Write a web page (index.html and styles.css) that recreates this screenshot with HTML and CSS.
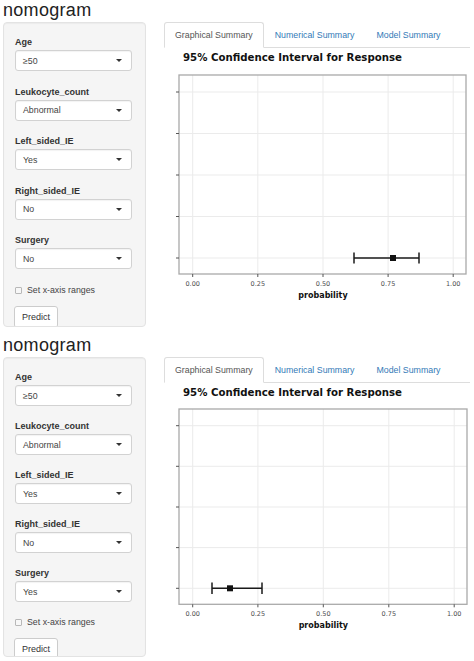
FILE: index.html
```html
<!DOCTYPE html>
<html>
<head>
<meta charset="utf-8">
<link rel="stylesheet" href="styles.css">
</head>
<body>
<section class="app">
  <h2 class="app-title">nomogram</h2>
  <div class="app-row">
    <div class="well">
      <div class="field"><span class="field-label">Age</span><div class="select"><span>≥50</span><i class="caret"></i></div></div>
      <div class="field"><span class="field-label">Leukocyte_count</span><div class="select"><span>Abnormal</span><i class="caret"></i></div></div>
      <div class="field"><span class="field-label">Left_sided_IE</span><div class="select"><span>Yes</span><i class="caret"></i></div></div>
      <div class="field"><span class="field-label">Right_sided_IE</span><div class="select"><span>No</span><i class="caret"></i></div></div>
      <div class="field"><span class="field-label">Surgery</span><div class="select"><span>No</span><i class="caret"></i></div></div>
      <div class="check"><span class="check-box"></span><span>Set x-axis ranges</span></div>
      <button class="btn">Predict</button>
    </div>
    <div class="main">
      <ul class="tabs">
        <li class="tab tab--active">Graphical Summary</li>
        <li class="tab">Numerical Summary</li>
        <li class="tab">Model Summary</li>
      </ul>
      <div class="plot-title">95% Confidence Interval for Response</div>
      <svg class="plot" width="306" height="237" viewBox="0 0 306 237">
        <g class="grid">
          <line x1="28.7" y1="7" x2="28.7" y2="206"/><line x1="93.8" y1="7" x2="93.8" y2="206"/><line x1="159" y1="7" x2="159" y2="206"/><line x1="224.1" y1="7" x2="224.1" y2="206"/><line x1="289.2" y1="7" x2="289.2" y2="206"/>
          <line x1="15" y1="24" x2="302" y2="24"/><line x1="15" y1="65.5" x2="302" y2="65.5"/><line x1="15" y1="107" x2="302" y2="107"/><line x1="15" y1="148.5" x2="302" y2="148.5"/><line x1="15" y1="190" x2="302" y2="190"/>
        </g>
        <rect class="frame" x="15" y="7" width="287" height="199"/>
        <g class="tick">
          <line x1="12" y1="24" x2="15" y2="24"/><line x1="12" y1="65.5" x2="15" y2="65.5"/><line x1="12" y1="107" x2="15" y2="107"/><line x1="12" y1="148.5" x2="15" y2="148.5"/><line x1="12" y1="190" x2="15" y2="190"/>
          <line x1="28.7" y1="206" x2="28.7" y2="209"/><line x1="93.8" y1="206" x2="93.8" y2="209"/><line x1="159" y1="206" x2="159" y2="209"/><line x1="224.1" y1="206" x2="224.1" y2="209"/><line x1="289.2" y1="206" x2="289.2" y2="209"/>
        </g>
        <g class="axis-label">
          <text x="28.7" y="217.7">0.00</text><text x="93.8" y="217.7">0.25</text><text x="159" y="217.7">0.50</text><text x="224.1" y="217.7">0.75</text><text x="289.2" y="217.7">1.00</text>
        </g>
        <text class="axis-title" x="159" y="230.1">probability</text>
        <g class="errorbar">
          <line x1="190" y1="190" x2="255" y2="190"/><line x1="190" y1="184.5" x2="190" y2="195.5"/><line x1="255" y1="184.5" x2="255" y2="195.5"/>
        </g>
        <rect class="point" x="226" y="187" width="6" height="6"/>
      </svg>
    </div>
  </div>
</section>
<section class="app app--second">
  <h2 class="app-title">nomogram</h2>
  <div class="app-row">
    <div class="well">
      <div class="field"><span class="field-label">Age</span><div class="select"><span>≥50</span><i class="caret"></i></div></div>
      <div class="field"><span class="field-label">Leukocyte_count</span><div class="select"><span>Abnormal</span><i class="caret"></i></div></div>
      <div class="field"><span class="field-label">Left_sided_IE</span><div class="select"><span>Yes</span><i class="caret"></i></div></div>
      <div class="field"><span class="field-label">Right_sided_IE</span><div class="select"><span>No</span><i class="caret"></i></div></div>
      <div class="field"><span class="field-label">Surgery</span><div class="select"><span>Yes</span><i class="caret"></i></div></div>
      <div class="check"><span class="check-box"></span><span>Set x-axis ranges</span></div>
      <button class="btn">Predict</button>
    </div>
    <div class="main">
      <ul class="tabs">
        <li class="tab tab--active">Graphical Summary</li>
        <li class="tab">Numerical Summary</li>
        <li class="tab">Model Summary</li>
      </ul>
      <div class="plot-title">95% Confidence Interval for Response</div>
      <svg class="plot" width="306" height="237" viewBox="0 0 306 237">
        <g class="grid">
          <line x1="28.7" y1="6" x2="28.7" y2="201.3"/><line x1="93.9" y1="6" x2="93.9" y2="201.3"/><line x1="159.3" y1="6" x2="159.3" y2="201.3"/><line x1="224.8" y1="6" x2="224.8" y2="201.3"/><line x1="290.2" y1="6" x2="290.2" y2="201.3"/>
          <line x1="15" y1="22.7" x2="303" y2="22.7"/><line x1="15" y1="63.3" x2="303" y2="63.3"/><line x1="15" y1="104" x2="303" y2="104"/><line x1="15" y1="144.6" x2="303" y2="144.6"/><line x1="15" y1="185.3" x2="303" y2="185.3"/>
        </g>
        <rect class="frame" x="15" y="6" width="288" height="195.3"/>
        <g class="tick">
          <line x1="12" y1="22.7" x2="15" y2="22.7"/><line x1="12" y1="63.3" x2="15" y2="63.3"/><line x1="12" y1="104" x2="15" y2="104"/><line x1="12" y1="144.6" x2="15" y2="144.6"/><line x1="12" y1="185.3" x2="15" y2="185.3"/>
          <line x1="28.7" y1="201.3" x2="28.7" y2="204.3"/><line x1="93.9" y1="201.3" x2="93.9" y2="204.3"/><line x1="159.3" y1="201.3" x2="159.3" y2="204.3"/><line x1="224.8" y1="201.3" x2="224.8" y2="204.3"/><line x1="290.2" y1="201.3" x2="290.2" y2="204.3"/>
        </g>
        <g class="axis-label">
          <text x="28.7" y="212.7">0.00</text><text x="93.9" y="212.7">0.25</text><text x="159.3" y="212.7">0.50</text><text x="224.8" y="212.7">0.75</text><text x="290.2" y="212.7">1.00</text>
        </g>
        <text class="axis-title" x="159.3" y="224.8">probability</text>
        <g class="errorbar">
          <line x1="48" y1="185.3" x2="98" y2="185.3"/><line x1="48" y1="179.6" x2="48" y2="191"/><line x1="98" y1="179.6" x2="98" y2="191"/>
        </g>
        <rect class="point" x="63" y="182.3" width="6" height="6"/>
      </svg>
    </div>
  </div>
</section>
</body>
</html>
```

FILE: styles.css
```css
* { box-sizing: border-box; }

body {
  margin: 0;
  font-family: "Liberation Sans", Arial, sans-serif;
  color: #333;
  background: #fff;
}

.app {
  height: 335px;
  overflow: hidden;
  padding-left: 3px;
}

.app--second {
  height: 326px;
}

.app-title {
  margin: 0;
  height: 22px;
  font-size: 18px;
  line-height: 20px;
  font-weight: normal;
  letter-spacing: 0.3px;
  color: #222;
}

.app-row {
  display: flex;
  align-items: flex-start;
}

.well {
  flex: none;
  width: 143px;
  height: 305px;
  background: #f5f5f5;
  border: 1px solid #e3e3e3;
  border-radius: 4px;
  padding: 14px 13px 0 11px;
  overflow: hidden;
  box-shadow: inset 0 1px 1px rgba(0, 0, 0, 0.04);
}

.app--second .well {
  height: 300px;
}

.field {
  margin-bottom: 15.5px;
}

.app--second .field {
  margin-bottom: 15px;
}

.field-label {
  display: block;
  font-weight: bold;
  font-size: 9px;
  line-height: 11px;
  margin-bottom: 2px;
  color: #333;
}

.select {
  height: 21px;
  background: #fff;
  border: 1px solid #d2d2d2;
  border-radius: 3px;
  display: flex;
  align-items: center;
  justify-content: space-between;
  padding: 0 9px 0 7px;
  font-size: 8.8px;
  color: #444;
  box-shadow: inset 0 1px 1px rgba(0, 0, 0, 0.05);
}

.caret {
  width: 0;
  height: 0;
  border-left: 3px solid transparent;
  border-right: 3px solid transparent;
  border-top: 3.5px solid #333;
}

.check {
  display: flex;
  align-items: center;
  gap: 5px;
  height: 11px;
  font-size: 8.8px;
  line-height: 11px;
  color: #444;
  margin-bottom: 10.5px;
}

.app--second .check {
  margin-bottom: 9.5px;
}

.check-box {
  width: 7px;
  height: 7px;
  border: 1px solid #b8b8b8;
  border-radius: 1px;
  background: #f7f7f7;
}

.btn {
  display: block;
  margin-left: -1px;
  height: 22px;
  padding: 0 7px;
  font-family: "Liberation Sans", Arial, sans-serif;
  font-size: 9px;
  color: #333;
  background: #fff;
  border: 1px solid #ccc;
  border-radius: 3px;
}

.main {
  flex: none;
  width: 306px;
  margin-left: 18px;
}

.tabs {
  display: flex;
  list-style: none;
  margin: 0;
  padding: 0;
  border-bottom: 1px solid #ddd;
}

.tab {
  height: 26px;
  margin-bottom: -1px;
  padding: 0 10px;
  line-height: 24px;
  font-size: 8.8px;
  color: #337ab7;
  border: 1px solid transparent;
  border-radius: 3px 3px 0 0;
  white-space: nowrap;
}

.tab--active {
  color: #555;
  background: #fff;
  border-color: #ddd;
  border-bottom-color: #fff;
}

.plot-title {
  font-family: "DejaVu Sans", Verdana, sans-serif;
  font-weight: bold;
  font-size: 10.2px;
  line-height: 12px;
  height: 12px;
  margin: 4px 0 4px 19px;
  color: #111;
}

.plot {
  display: block;
}

.grid line {
  stroke: #ebebeb;
  stroke-width: 1;
}

.frame {
  fill: none;
  stroke: #a9a9a9;
  stroke-width: 1.3;
}

.tick line {
  stroke: #555;
  stroke-width: 1;
}

.axis-label text {
  font-family: "DejaVu Sans", Verdana, sans-serif;
  font-size: 6.5px;
  fill: #4d4d4d;
  text-anchor: middle;
}

.axis-title {
  font-family: "DejaVu Sans", Verdana, sans-serif;
  font-weight: bold;
  font-size: 8px;
  fill: #111;
  text-anchor: middle;
}

.errorbar line {
  stroke: #1a1a1a;
  stroke-width: 1.5;
}

.point {
  fill: #111;
}
```
